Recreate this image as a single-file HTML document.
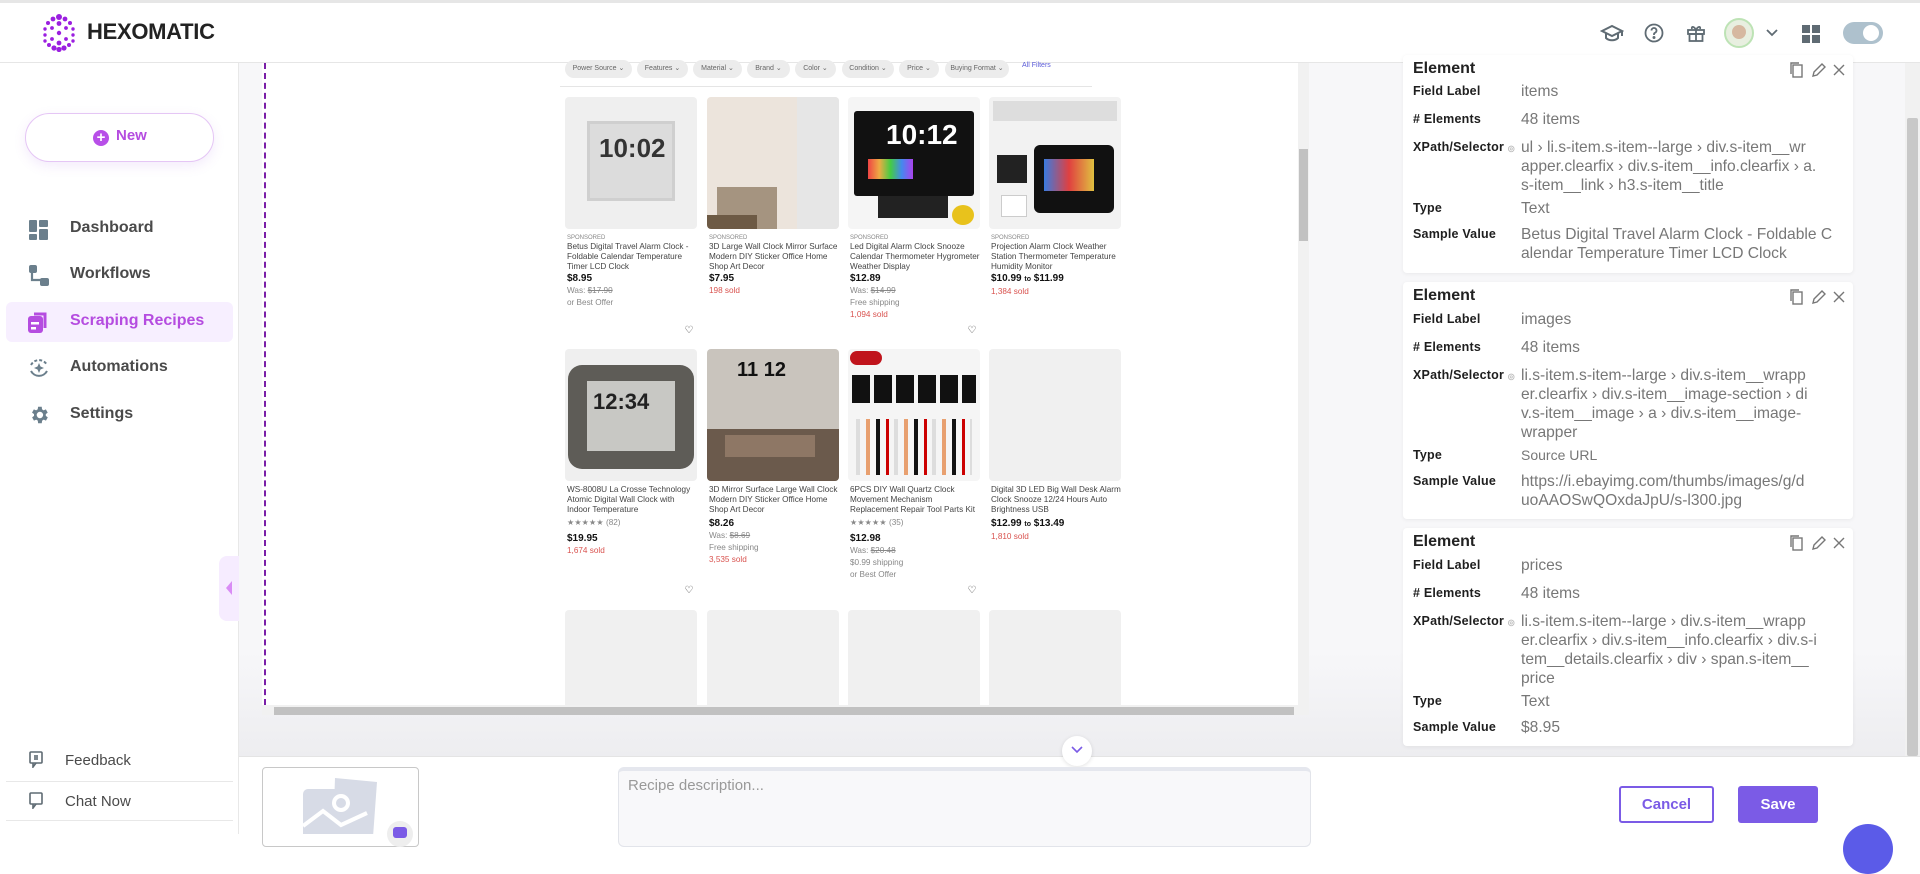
<!DOCTYPE html>
<html><head><meta charset="utf-8"><style>
*{box-sizing:border-box;margin:0;padding:0}
body{width:1920px;height:834px;overflow:hidden;background:#fff;font-family:"Liberation Sans",sans-serif;position:relative;color:#333}
.a{position:absolute}
.nav{position:absolute;left:70px;font-size:16px;color:#4a4a4a;font-weight:bold}
.chip{position:absolute;top:60px;height:18px;border-radius:9px;background:#ececec;font-size:7px;color:#666;line-height:18px;text-align:center}
.img{position:absolute;width:132px;height:132px;border-radius:4px;background:#f0f0f0;overflow:hidden}
.t{position:absolute;font-size:8.2px;line-height:10px;color:#444;width:132px}
.sp{font-size:6px;color:#888;line-height:8px}
.pr{font-size:10px;font-weight:bold;color:#111;line-height:14px}
.gr{color:#888}.rd{color:#d9534f}
.card{position:absolute;left:1403px;width:450px;background:#fff;border-radius:4px;box-shadow:0 1px 4px rgba(0,0,0,.06)}
.card .h{position:absolute;left:10px;font-size:16px;font-weight:bold;color:#222}
.lb{position:absolute;left:10px;font-size:12.5px;color:#1e1e1e;font-weight:bold;letter-spacing:.2px}
.vl{position:absolute;left:118px;font-size:15.6px;color:#777;line-height:19px;white-space:nowrap}
.heart{position:absolute;width:12px;height:12px;font-size:10px;color:#333;line-height:12px;text-align:center}
</style></head><body>
<!-- header -->
<div class="a" style="left:0;top:0;width:1920px;height:3px;background:#e6e6e6"></div>
<div class="a" style="left:0;top:62px;width:1920px;height:1px;background:#e6e6e6"></div>
<svg class="a" style="left:42px;top:14px" width="34" height="38" viewBox="0 0 34 38">
<g fill="#9b1fe0">
<circle cx="17" cy="3" r="3"/><circle cx="11" cy="5" r="2.4"/><circle cx="23" cy="5" r="2.4"/>
<circle cx="6" cy="9" r="2"/><circle cx="28" cy="9" r="2"/><circle cx="17" cy="9.5" r="2.4"/>
<circle cx="3" cy="15" r="1.7"/><circle cx="31" cy="15" r="1.7"/><circle cx="10" cy="14" r="1.9"/><circle cx="24" cy="14" r="1.9"/>
<circle cx="3" cy="21" r="1.7"/><circle cx="31" cy="21" r="1.7"/><circle cx="17" cy="19" r="2.2"/>
<circle cx="3" cy="27" r="1.7"/><circle cx="31" cy="27" r="1.7"/><circle cx="10" cy="25" r="1.9"/><circle cx="24" cy="25" r="1.9"/>
<circle cx="7" cy="31" r="2"/><circle cx="27" cy="31" r="2"/><circle cx="17" cy="29" r="2.4"/>
<circle cx="12" cy="34" r="2.6"/><circle cx="22" cy="34" r="2.6"/><circle cx="17" cy="35.5" r="2.6"/>
</g></svg>
<div class="a" style="left:87px;top:19px;font-size:22px;font-weight:bold;color:#222;letter-spacing:-.3px">HEXOMATIC</div>
<!-- header icons -->
<svg class="a" style="left:1600px;top:24px" width="24" height="20" viewBox="0 0 24 20" fill="none" stroke="#5f6b73" stroke-width="2"><path d="M2 7l10-5 10 5-10 5z"/><path d="M6 9v5c3 3 9 3 12 0V9"/><path d="M22 7v5"/></svg>
<svg class="a" style="left:1644px;top:23px" width="20" height="20" viewBox="0 0 20 20" fill="none" stroke="#5f6b73" stroke-width="1.8"><circle cx="10" cy="10" r="8.5"/><path d="M7.5 7.5a2.5 2.5 0 1 1 3.5 2.3c-.7.3-1 .8-1 1.5v.7"/><circle cx="10" cy="14.5" r=".6" fill="#5f6b73"/></svg>
<svg class="a" style="left:1686px;top:23px" width="20" height="20" viewBox="0 0 20 20" fill="none" stroke="#5f6b73" stroke-width="1.8"><rect x="2" y="7" width="16" height="4"/><rect x="3.5" y="11" width="13" height="7"/><path d="M10 7v11M10 7C8 3 5 3 6 6M10 7c2-4 5-4 4-1"/></svg>
<div class="a" style="left:1724px;top:18px;width:30px;height:30px;border-radius:50%;background:#e8efe0;border:2px solid #bde3b5"></div>
<div class="a" style="left:1732px;top:25px;width:14px;height:14px;border-radius:50%;background:#d6b8a0"></div>
<svg class="a" style="left:1765px;top:28px" width="14" height="9" viewBox="0 0 14 9" fill="none" stroke="#5f6b73" stroke-width="1.8"><path d="M2 2l5 5 5-5"/></svg>
<svg class="a" style="left:1802px;top:25px" width="18" height="18"><g fill="#5f6b73"><rect width="8" height="8"/><rect x="10" width="8" height="8"/><rect y="10" width="8" height="8"/><rect x="10" y="10" width="8" height="8"/></g></svg>
<div class="a" style="left:1843px;top:22px;width:40px;height:22px;border-radius:11px;background:#aec1cd"></div>
<div class="a" style="left:1863px;top:25px;width:16px;height:16px;border-radius:50%;background:#fff"></div>

<!-- sidebar -->
<div class="a" style="left:238px;top:63px;width:1px;height:771px;background:#e8e8e8"></div>
<div class="a" style="left:25px;top:113px;width:189px;height:49px;border:1px solid #e5c6f5;border-radius:25px;box-shadow:0 4px 12px rgba(160,90,220,.12);background:#fff"></div>
<div class="a" style="left:93px;top:130px;width:16px;height:16px;border-radius:50%;background:#b84fe8;color:#fff;font-size:15px;line-height:15px;text-align:center;font-weight:bold">+</div>
<div class="a" style="left:116px;top:127px;font-size:15px;color:#b54ce0;font-weight:bold">New</div>

<svg class="a" style="left:29px;top:220px" width="19" height="20"><g fill="#6b7f8c"><rect width="8" height="12" rx="1"/><rect x="10" width="9" height="7" rx="1"/><rect y="14" width="8" height="6" rx="1"/><rect x="10" y="9" width="9" height="11" rx="1"/></g></svg>
<div class="nav" style="top:219px">Dashboard</div>
<svg class="a" style="left:29px;top:265px" width="20" height="21" fill="#6b7f8c"><rect width="8" height="8" rx="2"/><rect x="11" y="13" width="9" height="8" rx="2"/><path d="M3 7v8h9" stroke="#6b7f8c" stroke-width="2.2" fill="none"/></svg>
<div class="nav" style="top:265px">Workflows</div>
<div class="a" style="left:6px;top:302px;width:227px;height:40px;border-radius:6px;background:#f7efff"></div>
<svg class="a" style="left:28px;top:311px" width="22" height="22" fill="#b54ce0"><rect x="0" y="5" width="15" height="17" rx="3"/><path d="M6 3h11v14" stroke="#b54ce0" stroke-width="3" fill="none"/><rect x="3" y="11" width="8" height="2.5" fill="#fff"/><rect x="3" y="16" width="5" height="2.5" fill="#fff"/></svg>
<div class="nav" style="top:312px;color:#b54ce0">Scraping Recipes</div>
<svg class="a" style="left:28px;top:357px" width="22" height="22" fill="none" stroke="#6b7f8c" stroke-width="2"><path d="M3 8A9 9 0 0 1 19 8" stroke-dasharray="3 2"/><path d="M19 14A9 9 0 0 1 3 14"/><path d="M11 6l1.5 3.5L16 11l-3.5 1.5L11 16l-1.5-3.5L6 11l3.5-1.5z" fill="#6b7f8c" stroke="none"/></svg>
<div class="nav" style="top:358px">Automations</div>
<svg class="a" style="left:28px;top:404px" width="22" height="22" viewBox="0 0 24 24"><path fill="#6b7f8c" d="M19.4 13a7.7 7.7 0 0 0 0-2l2.1-1.6-2-3.5-2.5 1a7.6 7.6 0 0 0-1.7-1L15 3h-4l-.4 2.9a7.6 7.6 0 0 0-1.7 1l-2.5-1-2 3.5L6.6 11a7.7 7.7 0 0 0 0 2l-2.1 1.6 2 3.5 2.5-1c.5.4 1.1.7 1.700 1L11 21h4l.4-2.9c.6-.3 1.2-.6 1.7-1l2.5 1 2-3.5zM13 15.5A3.5 3.5 0 1 1 13 8.5a3.5 3.5 0 0 1 0 7z"/></svg>
<div class="nav" style="top:405px">Settings</div>

<svg class="a" style="left:29px;top:751px" width="14" height="17" fill="none" stroke="#5f6b73" stroke-width="1.6"><rect x="1" y="1" width="12" height="11" rx="1"/><path d="M4 12v4l3-4M6 4v5M8 4v5"/></svg>
<div class="a" style="left:65px;top:752px;font-size:15px;color:#4a4a4a">Feedback</div>
<div class="a" style="left:6px;top:781px;width:227px;height:1px;background:#e8e8e8"></div>
<svg class="a" style="left:29px;top:792px" width="14" height="17" fill="none" stroke="#5f6b73" stroke-width="1.6"><rect x="1" y="1" width="12" height="11" rx="1"/><path d="M4 12v4l3-4"/></svg>
<div class="a" style="left:65px;top:793px;font-size:15px;color:#4a4a4a">Chat Now</div>
<div class="a" style="left:6px;top:820px;width:227px;height:1px;background:#e8e8e8"></div>

<!-- main bg -->
<div class="a" style="left:239px;top:63px;width:1681px;height:693px;background:linear-gradient(#f7f7f9 85%,#ededf0)"></div>
<div class="a" style="left:219px;top:556px;width:20px;height:65px;border-radius:8px 0 0 8px;background:#f6ecff"></div>
<div class="a" style="left:226px;top:581px;width:0;height:0;border-top:7px solid transparent;border-bottom:7px solid transparent;border-right:6px solid #d98cf5"></div>

<!-- screenshot frame -->
<div class="a" style="left:262px;top:63px;width:1047px;height:652px;background:#fff;overflow:hidden">
 <div class="a" style="left:2px;top:0;width:0;height:642px;border-left:2px dashed #7a1fa8"></div>
 <div class="a" style="left:1036px;top:0;width:11px;height:642px;background:#f1f1f1"></div>
 <div class="a" style="left:1037px;top:86px;width:9px;height:92px;background:#c1c1c1"></div>
 <div class="a" style="left:0;top:642px;width:1047px;height:10px;background:#f1f1f1"></div>
 <div class="a" style="left:12px;top:644px;width:1020px;height:8px;background:#c1c1c1"></div>
</div>
<div class="chip" style="left:565px;width:67px">Power Source ⌄</div>
<div class="chip" style="left:637px;width:51px">Features ⌄</div>
<div class="chip" style="left:693px;width:49px">Material ⌄</div>
<div class="chip" style="left:747px;width:43px">Brand ⌄</div>
<div class="chip" style="left:795px;width:41px">Color ⌄</div>
<div class="chip" style="left:842px;width:52px">Condition ⌄</div>
<div class="chip" style="left:899px;width:40px">Price ⌄</div>
<div class="chip" style="left:945px;width:64px">Buying Format ⌄</div>
<div class="a" style="left:1022px;top:62px;font-size:7px;color:#5a5ad8">All Filters</div>
<div class="a" style="left:560px;top:86px;width:532px;height:1px;background:#e5e5e5"></div>

<!-- row1 -->
<div class="img" style="left:565px;top:97px;background:#efefef"><div class="a" style="left:22px;top:24px;width:88px;height:80px;background:#dcdcdc;border:3px solid #cfcfcf"></div><div class="a" style="left:34px;top:36px;font-size:26px;font-weight:bold;color:#333">10:02</div></div>
<div class="img" style="left:707px;top:97px;background:#ece4dc"><div class="a" style="left:90px;top:0;width:42px;height:132px;background:#e6e6e6"></div><div class="a" style="left:10px;top:90px;width:60px;height:42px;background:#a59480"></div><div class="a" style="left:0;top:118px;width:50px;height:14px;background:#6d5a45"></div></div>
<div class="img" style="left:848px;top:97px;background:#f5f5f5"><div class="a" style="left:6px;top:14px;width:120px;height:85px;background:#111;border-radius:3px"></div><div class="a" style="left:38px;top:22px;font-size:28px;font-weight:bold;color:#fff">10:12</div><div class="a" style="left:20px;top:62px;width:45px;height:20px;background:linear-gradient(90deg,#e44,#ea4,#4c4,#48e,#a4e)"></div><div class="a" style="left:30px;top:99px;width:70px;height:22px;background:#222"></div><div class="a" style="left:104px;top:108px;width:22px;height:20px;border-radius:50%;background:#e8c21c"></div></div>
<div class="img" style="left:989px;top:97px;background:#f2f2f2"><div class="a" style="left:4px;top:4px;width:124px;height:20px;background:#ddd"></div><div class="a" style="left:45px;top:48px;width:80px;height:68px;background:#111;border-radius:6px"></div><div class="a" style="left:55px;top:62px;width:50px;height:32px;background:linear-gradient(90deg,#3a7be0,#e04040,#e0c040)"></div><div class="a" style="left:8px;top:58px;width:30px;height:28px;background:#222"></div><div class="a" style="left:12px;top:98px;width:26px;height:22px;background:#fff;border:1px solid #ccc"></div></div>

<div class="t" style="left:567px;top:234px"><div class="sp">SPONSORED</div>Betus Digital Travel Alarm Clock - Foldable Calendar Temperature Timer LCD Clock<div class="pr">$8.95</div><div class="gr">Was: <s>$17.90</s></div><div class="gr" style="margin-top:2px">or Best Offer</div></div>
<div class="t" style="left:709px;top:234px"><div class="sp">SPONSORED</div>3D Large Wall Clock Mirror Surface Modern DIY Sticker Office Home Shop Art Decor<div class="pr">$7.95</div><div class="rd">198 sold</div></div>
<div class="t" style="left:850px;top:234px"><div class="sp">SPONSORED</div>Led Digital Alarm Clock Snooze Calendar Thermometer Hygrometer Weather Display<div class="pr">$12.89</div><div class="gr">Was: <s>$14.99</s></div><div class="gr" style="margin-top:2px">Free shipping</div><div class="rd" style="margin-top:2px">1,094 sold</div></div>
<div class="t" style="left:991px;top:234px"><div class="sp">SPONSORED</div>Projection Alarm Clock Weather Station Thermometer Temperature Humidity Monitor<div class="pr">$10.99 <span style="font-size:7px">to</span> $11.99</div><div class="rd">1,384 sold</div></div>
<div class="heart" style="left:683px;top:325px">♡</div><div class="heart" style="left:966px;top:325px">♡</div>

<!-- row2 -->
<div class="img" style="left:565px;top:349px;background:#efefef"><div class="a" style="left:3px;top:16px;width:126px;height:104px;background:#5e5c57;border-radius:14px"></div><div class="a" style="left:22px;top:32px;width:88px;height:70px;background:#c8c8c4"></div><div class="a" style="left:28px;top:40px;font-size:22px;font-weight:bold;color:#222">12:34</div></div>
<div class="img" style="left:707px;top:349px;background:#c9c4bd"><div class="a" style="left:0;top:80px;width:132px;height:52px;background:#6b5a4c"></div><div class="a" style="left:18px;top:86px;width:90px;height:22px;background:#8e7765"></div><div class="a" style="left:30px;top:10px;font-size:20px;font-weight:bold;color:#111">11 12</div></div>
<div class="img" style="left:848px;top:349px;background:#f5f5f5"><div class="a" style="left:2px;top:2px;width:32px;height:14px;background:#c0141c;border-radius:7px"></div><div class="a" style="left:4px;top:26px;width:124px;height:28px;background:repeating-linear-gradient(90deg,#111 0 18px,#f5f5f5 18px 22px)"></div><div class="a" style="left:8px;top:70px;width:116px;height:56px;background:repeating-linear-gradient(90deg,#ddd 0 4px,#f5f5f5 4px 10px,#e8a070 10px 14px,#f5f5f5 14px 20px,#111 20px 24px,#f5f5f5 24px 30px,#c00 30px 33px,#f5f5f5 33px 38px)"></div></div>
<div class="img" style="left:989px;top:349px;background:#f0f0f0"></div>

<div class="t" style="left:567px;top:485px">WS-8008U La Crosse Technology Atomic Digital Wall Clock with Indoor Temperature<div class="gr" style="margin-top:3px">★★★★★ (82)</div><div class="pr" style="margin-top:4px">$19.95</div><div class="rd">1,674 sold</div></div>
<div class="t" style="left:709px;top:485px">3D Mirror Surface Large Wall Clock Modern DIY Sticker Office Home Shop Art Decor<div class="pr" style="margin-top:2px">$8.26</div><div class="gr">Was: <s>$8.69</s></div><div class="gr" style="margin-top:2px">Free shipping</div><div class="rd" style="margin-top:2px">3,535 sold</div></div>
<div class="t" style="left:850px;top:485px">6PCS DIY Wall Quartz Clock Movement Mechanism Replacement Repair Tool Parts Kit<div class="gr" style="margin-top:3px">★★★★★ (35)</div><div class="pr" style="margin-top:4px">$12.98</div><div class="gr">Was: <s>$20.48</s></div><div class="gr" style="margin-top:2px">$0.99 shipping</div><div class="gr" style="margin-top:2px">or Best Offer</div></div>
<div class="t" style="left:991px;top:485px">Digital 3D LED Big Wall Desk Alarm Clock Snooze 12/24 Hours Auto Brightness USB<div class="pr" style="margin-top:2px">$12.99 <span style="font-size:7px">to</span> $13.49</div><div class="rd">1,810 sold</div></div>
<div class="heart" style="left:683px;top:585px">♡</div><div class="heart" style="left:966px;top:585px">♡</div>

<!-- row3 -->
<div class="img" style="left:565px;top:610px;height:95px;border-radius:4px 4px 0 0"></div>
<div class="img" style="left:707px;top:610px;height:95px;border-radius:4px 4px 0 0"></div>
<div class="img" style="left:848px;top:610px;height:95px;border-radius:4px 4px 0 0"></div>
<div class="img" style="left:989px;top:610px;height:95px;border-radius:4px 4px 0 0"></div>

<!-- right panel scrollbar -->
<div class="a" style="left:1905px;top:63px;width:15px;height:693px;background:#f1f1f1"></div>
<div class="a" style="left:1907px;top:118px;width:11px;height:638px;background:#c8c8c8;border-radius:2px"></div>

<!-- card1 -->
<div class="card" style="top:55px;height:218px">
 <div class="h" style="top:5px">Element</div>
 <div class="lb" style="top:29px">Field Label</div><div class="vl" style="top:27px">items</div>
 <div class="lb" style="top:57px"># Elements</div><div class="vl" style="top:55px">48 items</div>
 <div class="lb" style="top:85px">XPath/Selector <span style="color:#bbb;font-size:8px">◎</span></div><div class="vl" style="top:83px">ul › li.s-item.s-item--large › div.s-item__wr<br>apper.clearfix › div.s-item__info.clearfix › a.<br>s-item__link › h3.s-item__title</div>
 <div class="lb" style="top:146px">Type</div><div class="vl" style="top:144px">Text</div>
 <div class="lb" style="top:172px">Sample Value</div><div class="vl" style="top:170px">Betus Digital Travel Alarm Clock - Foldable C<br>alendar Temperature Timer LCD Clock</div>
</div>
<!-- card2 -->
<div class="card" style="top:282px;height:237px">
 <div class="h" style="top:5px">Element</div>
 <div class="lb" style="top:30px">Field Label</div><div class="vl" style="top:28px">images</div>
 <div class="lb" style="top:58px"># Elements</div><div class="vl" style="top:56px">48 items</div>
 <div class="lb" style="top:86px">XPath/Selector <span style="color:#bbb;font-size:8px">◎</span></div><div class="vl" style="top:84px">li.s-item.s-item--large › div.s-item__wrapp<br>er.clearfix › div.s-item__image-section › di<br>v.s-item__image › a › div.s-item__image-<br>wrapper</div>
 <div class="lb" style="top:166px">Type</div><div class="vl" style="top:164px;font-size:14px">Source URL</div>
 <div class="lb" style="top:192px">Sample Value</div><div class="vl" style="top:190px">https://i.ebayimg.com/thumbs/images/g/d<br>uoAAOSwQOxdaJpU/s-l300.jpg</div>
</div>
<!-- card3 -->
<div class="card" style="top:528px;height:218px">
 <div class="h" style="top:5px">Element</div>
 <div class="lb" style="top:30px">Field Label</div><div class="vl" style="top:28px">prices</div>
 <div class="lb" style="top:58px"># Elements</div><div class="vl" style="top:56px">48 items</div>
 <div class="lb" style="top:86px">XPath/Selector <span style="color:#bbb;font-size:8px">◎</span></div><div class="vl" style="top:84px">li.s-item.s-item--large › div.s-item__wrapp<br>er.clearfix › div.s-item__info.clearfix › div.s-i<br>tem__details.clearfix › div › span.s-item__<br>price</div>
 <div class="lb" style="top:166px">Type</div><div class="vl" style="top:164px">Text</div>
 <div class="lb" style="top:192px">Sample Value</div><div class="vl" style="top:190px">$8.95</div>
</div>
<!-- card icons -->
<svg class="a" style="left:1789px;top:62px" width="60" height="16" fill="none" stroke="#777" stroke-width="1.4"><rect x="4" y="3" width="9" height="12"/><path d="M2 12V1h8"/><path d="M24 14l1-4 8-8 3 3-8 8z"/><path d="M45 3l10 10M55 3L45 13"/></svg>
<svg class="a" style="left:1789px;top:289px" width="60" height="16" fill="none" stroke="#777" stroke-width="1.4"><rect x="4" y="3" width="9" height="12"/><path d="M2 12V1h8"/><path d="M24 14l1-4 8-8 3 3-8 8z"/><path d="M45 3l10 10M55 3L45 13"/></svg>
<svg class="a" style="left:1789px;top:535px" width="60" height="16" fill="none" stroke="#777" stroke-width="1.4"><rect x="4" y="3" width="9" height="12"/><path d="M2 12V1h8"/><path d="M24 14l1-4 8-8 3 3-8 8z"/><path d="M45 3l10 10M55 3L45 13"/></svg>

<!-- bottom -->
<div class="a" style="left:239px;top:756px;width:1681px;height:1px;background:#e4e4e4"></div>
<div class="a" style="left:1062px;top:736px;width:30px;height:30px;border-radius:50%;background:#fff;box-shadow:0 1px 4px rgba(0,0,0,.12)"></div>
<svg class="a" style="left:1071px;top:746px" width="12" height="8" fill="none" stroke="#7b5be6" stroke-width="1.6"><path d="M1 1l5 5 5-5"/></svg>
<div class="a" style="left:262px;top:767px;width:157px;height:80px;border:1px solid #c8c8c8;border-radius:4px;background:#fff"></div>
<svg class="a" style="left:300px;top:776px" width="80" height="58"><path d="M35 2l42 4-4 55-40-2z" fill="#d7dbe6"/><rect x="3" y="13" width="64" height="50" rx="5" fill="#d7dbe6"/><circle cx="41" cy="27" r="7" fill="none" stroke="#fff" stroke-width="4"/><path d="M3 50l20-15 18 14 26-12" fill="none" stroke="#fff" stroke-width="4"/></svg>
<div class="a" style="left:387px;top:821px;width:26px;height:26px;border-radius:50%;background:#eee"></div>
<div class="a" style="left:393px;top:827px;width:14px;height:11px;border-radius:3px;background:#7b5be6"></div>
<div class="a" style="left:618px;top:767px;width:693px;height:80px;border:1px solid #e2e4ea;border-top:4px solid #e5e7ee;border-radius:6px;background:#f8f8fa"></div>
<div class="a" style="left:628px;top:777px;font-size:15px;color:#999">Recipe description...</div>
<div class="a" style="left:1619px;top:786px;width:95px;height:37px;border:2px solid #7b5be6;border-radius:3px;font-size:15px;font-weight:bold;color:#7b5be6;text-align:center;line-height:33px">Cancel</div>
<div class="a" style="left:1738px;top:786px;width:80px;height:37px;background:#7b5be6;border-radius:3px;font-size:15px;font-weight:bold;color:#fff;text-align:center;line-height:37px">Save</div>
<div class="a" style="left:1843px;top:824px;width:50px;height:50px;border-radius:50%;background:#5b5be8"></div>
</body></html>
